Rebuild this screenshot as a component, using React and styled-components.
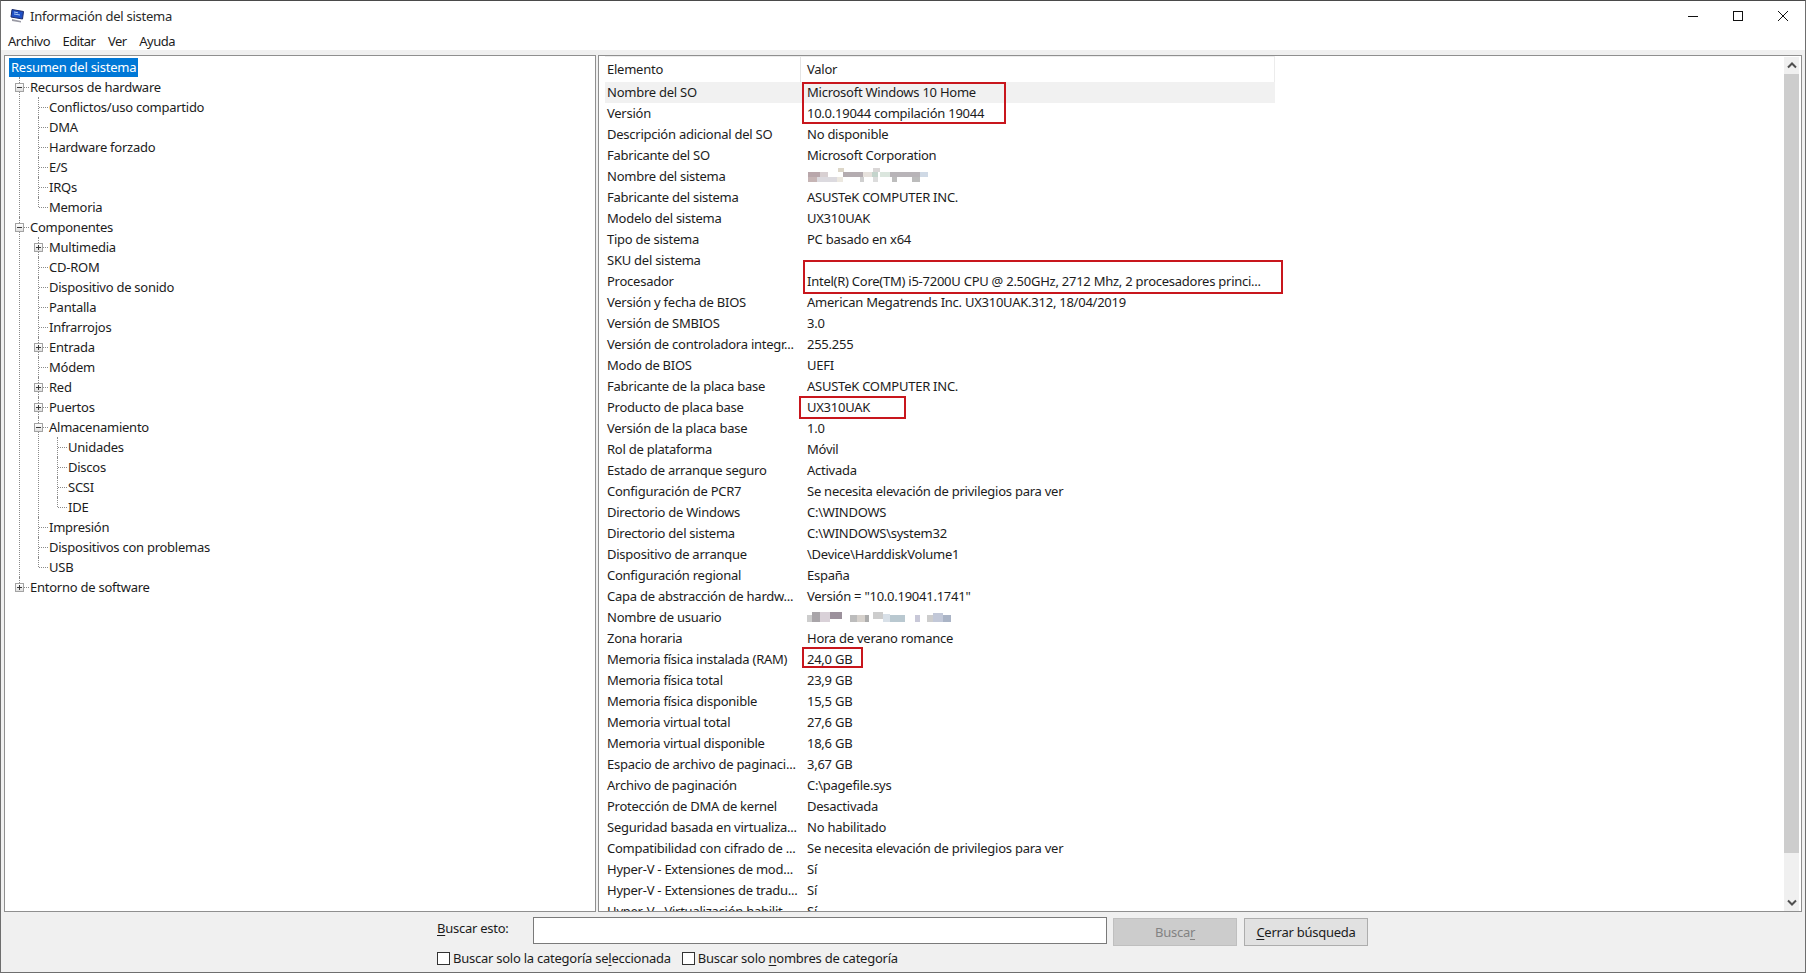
import React from "react";
import styled, { createGlobalStyle } from "styled-components";

const Global = createGlobalStyle`
  html, body { margin: 0; padding: 0; background: #fff; }
  * { box-sizing: border-box; }
`;

const Window = styled.div`
  width: 1806px;
  height: 973px;
  display: flex;
  flex-direction: column;
  overflow: hidden;
  background: #fff;
  border: 1px solid #6e6e6e;
  border-top-color: #4a4a4a;
  font-family: "Noto Sans", "Open Sans", sans-serif;
  font-size: 13px;
  letter-spacing: -0.25px;
  color: #1c1c1c;
`;

const TitleBar = styled.header`
  height: 29px;
  flex: none;
  display: flex;
  align-items: center;
  padding-left: 8px;
  gap: 5px;
`;
const TitleText = styled.span`
  flex: 1;
  color: #2a2a2a;
`;
const WinControls = styled.div`
  display: flex;
  align-self: stretch;
`;
const WinButton = styled.div`
  width: 45px;
  display: flex;
  align-items: center;
  justify-content: center;
`;

const MenuBar = styled.nav`
  height: 20px;
  flex: none;
  display: flex;
  align-items: center;
  gap: 12.5px;
  padding: 1px 0 0 7px;
  letter-spacing: -0.5px;
`;
const MenuItem = styled.span``;

const Panes = styled.main`
  height: 862px;
  flex: none;
  display: flex;
  gap: 2px;
  background: #f0f0f0;
  padding: 5px 3px 0 3px;
`;
const TreePane = styled.section`
  width: 592px;
  flex: none;
  background: #fff;
  border: 1px solid #8f8f8f;
  padding: 1px 0 0 4px;
  overflow: hidden;
`;
const RootRow = styled.div`
  height: 20px;
  display: flex;
  align-items: flex-end;
`;
const Selected = styled.span`
  height: 19px;
  line-height: 18px;
  padding: 0 2px;
  background: #0078d7;
  color: #fff;
`;
const TreeList = styled.ul`
  list-style: none;
  margin: 0 0 0 ${(p) => p.$indent}px;
  padding: 0;
`;
const TreeItem = styled.li`
  position: relative;
  padding-left: 11px;
  &::before {
    content: "";
    position: absolute;
    left: 0;
    top: 0;
    bottom: 0;
    border-left: 1px dotted #8a8a8a;
  }
  &:last-child::before {
    bottom: auto;
    height: 10px;
  }
  &::after {
    content: "";
    position: absolute;
    left: 1px;
    top: 10px;
    width: 9px;
    border-top: 1px dotted #8a8a8a;
  }
`;
const TreeLabel = styled.div`
  height: 20px;
  line-height: 20px;
  white-space: nowrap;
`;
const Expander = styled.span`
  position: absolute;
  z-index: 1;
  left: -4px;
  top: 6px;
  width: 9px;
  height: 9px;
  border: 1px solid #a3a3a3;
  background: linear-gradient(#fff, #dfdfdf);
  &::before {
    content: "";
    position: absolute;
    left: 1px;
    top: 3px;
    width: 5px;
    height: 1px;
    background: #3a3a3a;
  }
  &::after {
    content: "";
    display: ${(p) => (p.$open ? "none" : "block")};
    position: absolute;
    left: 3px;
    top: 1px;
    width: 1px;
    height: 5px;
    background: #3a3a3a;
  }
`;

const ListPane = styled.section`
  position: relative;
  flex: 1;
  display: flex;
  background: #fff;
  border: 1px solid #8f8f8f;
  overflow: hidden;
`;
const ListBody = styled.div`
  flex: 1;
  padding-left: 6px;
  overflow: hidden;
`;
const HeaderRow = styled.div`
  display: grid;
  grid-template-columns: 195px 475px;
  width: 670px;
  height: 26px;
  line-height: 25px;
  border-top: 1px solid #ececec;
  border-right: 1px solid #ececec;
`;
const HeaderCell = styled.div`
  padding-left: ${(p) => p.$pad}px;
  & + & {
    border-left: 1px solid #e4e4e4;
  }
`;
const Row = styled.div`
  display: grid;
  grid-template-columns: 195px 475px;
  width: 670px;
  height: 21px;
  line-height: 21px;
  white-space: nowrap;
  background: ${(p) => (p.$hl ? "#f1f1f1" : "transparent")};
`;
const KeyCell = styled.div`
  padding-left: 2px;
  overflow: hidden;
`;
const ValueCell = styled.div`
  padding-left: 7px;
  overflow: hidden;
`;
const Mosaic = styled.svg`
  display: block;
`;
const RedMark = styled.div`
  position: absolute;
  left: ${(p) => p.$x}px;
  top: ${(p) => p.$y}px;
  width: ${(p) => p.$w}px;
  height: ${(p) => p.$h}px;
  border: 2px solid #c8161d;
`;

const ScrollBar = styled.aside`
  width: 15px;
  flex: none;
  margin: 1px 2px 0 0;
  display: flex;
  flex-direction: column;
  background: #f0f0f0;
`;
const ScrollButton = styled.div`
  height: 17px;
  flex: none;
  display: flex;
  align-items: center;
  justify-content: center;
`;
const ScrollThumb = styled.div`
  height: 779px;
  flex: none;
  background: #cdcdcd;
`;
const ScrollTrack = styled.div`
  flex: 1;
`;

const BottomBar = styled.footer`
  flex: 1;
  background: #f0f0f0;
  padding: 5px 0 0 436px;
`;
const SearchRow = styled.div`
  display: flex;
  align-items: flex-start;
`;
const SearchLabel = styled.label`
  width: 96px;
  height: 26px;
  line-height: 22px;
`;
const SearchInput = styled.input`
  width: 574px;
  height: 27px;
  background: #fff;
  border: 1px solid #7a7a7a;
  border-radius: 0;
  outline: none;
  padding: 0;
`;
const ActionButton = styled.div`
  width: 124px;
  height: 28px;
  margin: 1px 0 0 ${(p) => p.$gap}px;
  display: flex;
  align-items: center;
  justify-content: center;
  background: ${(p) => (p.$disabled ? "#cccccc" : "#e1e1e1")};
  border: 1px solid ${(p) => (p.$disabled ? "#bfbfbf" : "#adadad")};
  color: ${(p) => (p.$disabled ? "#838383" : "#1c1c1c")};
`;
const ActionText = styled.span``;
const CheckRow = styled.div`
  display: flex;
  align-items: center;
  gap: 11px;
  margin-top: 3px;
`;
const CheckLabel = styled.label`
  display: flex;
  align-items: center;
  gap: 3px;
  white-space: nowrap;
`;
const CheckText = styled.span``;
const CheckBox = styled.span`
  width: 13px;
  height: 13px;
  background: #fff;
  border: 1px solid #333;
`;
const Mnemonic = styled.span`
  text-decoration: underline;
  text-underline-offset: 2px;
`;

const tree = [
  {
    t: "Recursos de hardware",
    open: true,
    c: ["Conflictos/uso compartido", "DMA", "Hardware forzado", "E/S", "IRQs", "Memoria"].map((t) => ({ t })),
  },
  {
    t: "Componentes",
    open: true,
    c: [
      { t: "Multimedia", closed: true },
      { t: "CD-ROM" },
      { t: "Dispositivo de sonido" },
      { t: "Pantalla" },
      { t: "Infrarrojos" },
      { t: "Entrada", closed: true },
      { t: "Módem" },
      { t: "Red", closed: true },
      { t: "Puertos", closed: true },
      {
        t: "Almacenamiento",
        open: true,
        c: ["Unidades", "Discos", "SCSI", "IDE"].map((t) => ({ t })),
      },
      { t: "Impresión" },
      { t: "Dispositivos con problemas" },
      { t: "USB" },
    ],
  },
  { t: "Entorno de software", closed: true },
];

function TreeNodes({ nodes, indent }) {
  return (
    <TreeList $indent={indent}>
      {nodes.map((n) => (
        <TreeItem key={n.t}>
          {(n.open || n.closed) && <Expander $open={n.open} />}
          <TreeLabel>{n.t}</TreeLabel>
          {n.c && <TreeNodes nodes={n.c} indent={8} />}
        </TreeItem>
      ))}
    </TreeList>
  );
}

const sysBlocks = [
  [838, 168, 6, 4, "#dcd6c8"], [873, 168, 7, 4, "#d9d6d6"],
  [808, 172, 12, 5, "#b9a7ab"], [820, 172, 8, 5, "#d8d0d2"], [843, 172, 20, 5, "#b4acb0"],
  [863, 172, 9, 5, "#e6e1dc"], [872, 172, 6, 5, "#c4d4cc"], [880, 172, 10, 5, "#dbe6de"],
  [890, 172, 30, 5, "#b8b4b8"], [920, 172, 8, 5, "#cfd9e5"],
  [808, 177, 9, 5, "#c6b5b5"], [817, 177, 20, 5, "#dcdadf"], [837, 177, 6, 5, "#ece8e0"],
  [860, 177, 4, 5, "#cfcfcf"], [873, 177, 5, 5, "#dcdcdc"], [892, 177, 5, 5, "#bdbdbd"], [912, 177, 8, 5, "#bcbcbc"],
];
const userBlocks = [
  [807, 615, 5, 7, "#cdcdcd"], [812, 612, 8, 10, "#a9a5a9"], [820, 612, 10, 10, "#d9d1d8"], [830, 612, 12, 7, "#9c919c"],
  [850, 615, 7, 7, "#bcbcbc"], [857, 615, 8, 7, "#d6d1cc"], [865, 615, 4, 7, "#acacac"],
  [873, 612, 10, 7, "#cdcdcd"], [883, 614, 7, 8, "#d8e0e8"], [890, 615, 15, 7, "#b9c8d0"],
  [915, 615, 5, 7, "#c8c8d8"], [927, 615, 6, 7, "#cdcdcd"], [933, 613, 10, 9, "#c2c8d8"], [943, 615, 8, 7, "#aab4c6"],
];

const Pixels = ({ box, blocks, w }) => (
  <Mosaic width={w} height={21} viewBox={box} aria-hidden="true">
    {blocks.map(([x, y, bw, bh, f], i) => (
      <rect key={i} x={x} y={y} width={bw} height={bh} fill={f} />
    ))}
  </Mosaic>
);

const rows = [
  ["Nombre del SO", "Microsoft Windows 10 Home"],
  ["Versión", "10.0.19044 compilación 19044"],
  ["Descripción adicional del SO", "No disponible"],
  ["Fabricante del SO", "Microsoft Corporation"],
  ["Nombre del sistema", <Pixels box="807 166 130 21" blocks={sysBlocks} w={130} />],
  ["Fabricante del sistema", "ASUSTeK COMPUTER INC."],
  ["Modelo del sistema", "UX310UAK"],
  ["Tipo de sistema", "PC basado en x64"],
  ["SKU del sistema", ""],
  ["Procesador", "Intel(R) Core(TM) i5-7200U CPU @ 2.50GHz, 2712 Mhz, 2 procesadores princi..."],
  ["Versión y fecha de BIOS", "American Megatrends Inc. UX310UAK.312, 18/04/2019"],
  ["Versión de SMBIOS", "3.0"],
  ["Versión de controladora integr...", "255.255"],
  ["Modo de BIOS", "UEFI"],
  ["Fabricante de la placa base", "ASUSTeK COMPUTER INC."],
  ["Producto de placa base", "UX310UAK"],
  ["Versión de la placa base", "1.0"],
  ["Rol de plataforma", "Móvil"],
  ["Estado de arranque seguro", "Activada"],
  ["Configuración de PCR7", "Se necesita elevación de privilegios para ver"],
  ["Directorio de Windows", "C:\\WINDOWS"],
  ["Directorio del sistema", "C:\\WINDOWS\\system32"],
  ["Dispositivo de arranque", "\\Device\\HarddiskVolume1"],
  ["Configuración regional", "España"],
  ["Capa de abstracción de hardw...", 'Versión = "10.0.19041.1741"'],
  ["Nombre de usuario", <Pixels box="807 607 150 21" blocks={userBlocks} w={150} />],
  ["Zona horaria", "Hora de verano romance"],
  ["Memoria física instalada (RAM)", "24,0 GB"],
  ["Memoria física total", "23,9 GB"],
  ["Memoria física disponible", "15,5 GB"],
  ["Memoria virtual total", "27,6 GB"],
  ["Memoria virtual disponible", "18,6 GB"],
  ["Espacio de archivo de paginaci...", "3,67 GB"],
  ["Archivo de paginación", "C:\\pagefile.sys"],
  ["Protección de DMA de kernel", "Desactivada"],
  ["Seguridad basada en virtualiza...", "No habilitado"],
  ["Compatibilidad con cifrado de ...", "Se necesita elevación de privilegios para ver"],
  ["Hyper-V - Extensiones de mod...", "Sí"],
  ["Hyper-V - Extensiones de tradu...", "Sí"],
  ["Hyper-V - Virtualización habilit...", "Sí"],
];

const marks = [
  { x: 203, y: 26, w: 204, h: 42 },
  { x: 204, y: 204, w: 480, h: 34 },
  { x: 200, y: 340, w: 107, h: 23 },
  { x: 203, y: 591, w: 61, h: 21 },
];

const AppIcon = () => (
  <svg width="16" height="16" viewBox="0 0 16 16" aria-hidden="true">
    <path d="M3 1.5 L14.5 3.5 L13.5 11 L2 9 Z" fill="#1f4fc4" stroke="#1b2a6b" />
    <path d="M5 4 L9 4.8 M5 6 L11 7" stroke="#a9c8f5" />
    <path d="M3 11 L12 13 L12 14.5 L3 13 Z" fill="#9a9aa4" />
  </svg>
);

const Chevron = ({ up }) => (
  <svg width="10" height="7" viewBox="0 0 10 7" aria-hidden="true">
    <path d={up ? "M1 5.5 L5 1.5 L9 5.5" : "M1 1.5 L5 5.5 L9 1.5"} fill="none" stroke="#505050" strokeWidth="2" />
  </svg>
);

export default function App() {
  return (
    <Window>
      <Global />
      <TitleBar>
        <AppIcon />
        <TitleText>Información del sistema</TitleText>
        <WinControls>
          <WinButton>
            <svg width="10" height="10" viewBox="0 0 10 10" aria-hidden="true">
              <path d="M0 5.5 H10" stroke="#111" />
            </svg>
          </WinButton>
          <WinButton>
            <svg width="10" height="10" viewBox="0 0 10 10" aria-hidden="true">
              <rect x="0.5" y="0.5" width="9" height="9" fill="none" stroke="#111" />
            </svg>
          </WinButton>
          <WinButton>
            <svg width="10" height="10" viewBox="0 0 10 10" aria-hidden="true">
              <path d="M0 0 L10 10 M10 0 L0 10" stroke="#111" />
            </svg>
          </WinButton>
        </WinControls>
      </TitleBar>
      <MenuBar>
        {["Archivo", "Editar", "Ver", "Ayuda"].map((m) => (
          <MenuItem key={m}>{m}</MenuItem>
        ))}
      </MenuBar>
      <Panes>
        <TreePane>
          <RootRow>
            <Selected>Resumen del sistema</Selected>
          </RootRow>
          <TreeNodes nodes={tree} indent={10} />
        </TreePane>
        <ListPane>
          <ListBody>
            <HeaderRow>
              <HeaderCell $pad={2}>Elemento</HeaderCell>
              <HeaderCell $pad={6}>Valor</HeaderCell>
            </HeaderRow>
            {rows.map(([k, v], i) => (
              <Row key={k} $hl={i === 0}>
                <KeyCell>{k}</KeyCell>
                <ValueCell>{v}</ValueCell>
              </Row>
            ))}
          </ListBody>
          <ScrollBar>
            <ScrollButton>
              <Chevron up />
            </ScrollButton>
            <ScrollThumb />
            <ScrollTrack />
            <ScrollButton>
              <Chevron />
            </ScrollButton>
          </ScrollBar>
          {marks.map((m) => (
            <RedMark key={m.y} $x={m.x} $y={m.y} $w={m.w} $h={m.h} />
          ))}
        </ListPane>
      </Panes>
      <BottomBar>
        <SearchRow>
          <SearchLabel>
            <Mnemonic>B</Mnemonic>uscar esto:
          </SearchLabel>
          <SearchInput />
          <ActionButton $disabled $gap={6}>
            <ActionText>
              Busca<Mnemonic>r</Mnemonic>
            </ActionText>
          </ActionButton>
          <ActionButton $gap={7}>
            <ActionText>
              <Mnemonic>C</Mnemonic>errar búsqueda
            </ActionText>
          </ActionButton>
        </SearchRow>
        <CheckRow>
          <CheckLabel>
            <CheckBox />
            <CheckText>
              Buscar solo la categoría se<Mnemonic>l</Mnemonic>eccionada
            </CheckText>
          </CheckLabel>
          <CheckLabel>
            <CheckBox />
            <CheckText>
              Buscar solo <Mnemonic>n</Mnemonic>ombres de categoría
            </CheckText>
          </CheckLabel>
        </CheckRow>
      </BottomBar>
    </Window>
  );
}
